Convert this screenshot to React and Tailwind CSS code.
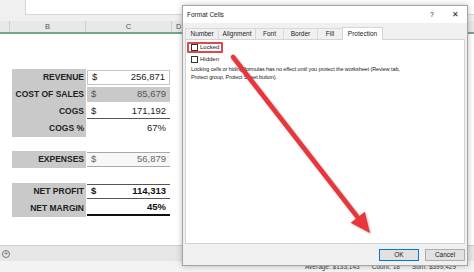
import React from "react";

const rows = [
  { label: "REVENUE", dollar: "$", value: "256,871", kind: "box" },
  { label: "COST OF SALES", dollar: "$", value: "85,679", kind: "shaded" },
  { label: "COGS", dollar: "$", value: "171,192", kind: "underline" },
  { label: "COGS %", dollar: "", value: "67%", kind: "plain" },
];

const ValueCell = ({ dollar, value, kind }) => {
  const styles = {
    box: "bg-white border border-[#c4c4c4] text-[#222]",
    shaded: "bg-[#c9c9c9] text-[#555]",
    underline: "bg-white border-b border-[#555] text-[#222]",
    plain: "bg-white text-[#222]",
    ruled: "bg-[#f7f7f7] border-y border-[#a8a8a8] text-[#666]",
    total: "bg-white border-y border-[#555] text-[#111] font-bold",
    double: "bg-white border-b-2 border-[#111] text-[#111] font-bold",
  };
  return (
    <div className="w-[84px] h-full pl-[1px] py-[1px]">
      <div
        className={`h-full flex items-center justify-between pl-[4px] pr-[4px] text-[9.5px] ${styles[kind]}`}
      >
        <span>{dollar}</span>
        <span>{value}</span>
      </div>
    </div>
  );
};

const SheetRow = ({ label, dollar, value, kind }) => (
  <div className="flex h-[17px]">
    <div className="w-[12px]" />
    <div className="w-[74px] bg-[#c9c9c9] flex items-center justify-end pr-[2px] text-[8.5px] font-bold text-[#222]">
      {label}
    </div>
    <ValueCell dollar={dollar} value={value} kind={kind} />
  </div>
);

const Tab = ({ children, active, w }) =>
  active ? (
    <div
      className={`${w} h-[13px] -mb-[1px] bg-white border border-b-0 border-[#d4d4d4] flex items-center justify-center text-[6.5px] text-[#222] relative z-10`}
    >
      {children}
    </div>
  ) : (
    <div
      className={`${w} h-[11px] mt-[1px] bg-[#f0f0f0] border border-r-0 border-b-0 border-[#d9d9d9] flex items-center justify-center text-[6.5px] text-[#222]`}
    >
      {children}
    </div>
  );

const Checkbox = () => (
  <div className="w-[7px] h-[7px] border border-[#333] bg-white" />
);

export default function App() {
  return (
    <div className="relative w-[474px] h-[272px] overflow-hidden bg-white flex flex-col font-['Liberation_Sans',Arial,sans-serif]">
      {/* formula bar */}
      <div className="bg-[#f0f0f0] pb-[6px]">
        <div className="ml-[25px] h-[15px] bg-white border-l border-b border-[#d6d6d6]" />
      </div>

      {/* column headers */}
      <div className="flex h-[13px] bg-[#e8e8e8] border-b-2 border-[#74a68a] text-[7.5px] text-[#555]">
        <div className="w-[10px] border-r border-[#cfcfcf]" />
        <div className="w-[76px] border-r border-[#cfcfcf] flex items-center justify-center">B</div>
        <div className="w-[86px] border-r border-[#cfcfcf] flex items-center justify-center">C</div>
        <div className="flex-1 flex items-center pl-[4px]">D</div>
      </div>

      {/* grid */}
      <div className="flex-1 bg-white pt-[35px]">
        {rows.map((r) => (
          <SheetRow key={r.label} {...r} />
        ))}
        <div className="h-[14px]" />
        <SheetRow label="EXPENSES" dollar="$" value="56,879" kind="ruled" />
        <div className="h-[15px]" />
        <SheetRow label="NET PROFIT" dollar="$" value="114,313" kind="total" />
        <SheetRow label="NET MARGIN" dollar="" value="45%" kind="double" />
      </div>

      {/* sheet tabs */}
      <div className="h-[16px] bg-[#e6e6e6] border-t border-[#cdcdcd] flex items-center pl-[2px]">
        <div className="w-[8px] h-[8px] rounded-full border border-[#777] flex items-center justify-center text-[7px] leading-none text-[#555]">
          +
        </div>
      </div>

      {/* status bar */}
      <div className="h-[11px] bg-[#f3f3f3] flex items-start justify-end pr-[18px] pt-[3px] gap-[12px] text-[6.5px] text-[#444] leading-none">
        <span>Average: $133,143</span>
        <span>Count: 18</span>
        <span>Sum: $399,429</span>
      </div>

      {/* Format Cells dialog */}
      <div className="absolute left-[182px] top-[5px] w-[286px] h-[261px] bg-[#f0f0f0] border border-[#a5a5a5] shadow-[0_0_6px_rgba(0,0,0,0.25)] flex flex-col">
        <div className="h-[17px] bg-white flex items-center pl-[4px] pt-[1px] text-[6.5px] text-[#222]">
          <span>Format Cells</span>
          <span className="ml-auto mr-[18px] text-[7px]">?</span>
          <span className="mr-[8px] text-[8px] font-light">✕</span>
        </div>
        <div className="flex items-end pl-[2px] pt-[4px]">
          <Tab w="w-[33px]">Number</Tab>
          <Tab w="w-[37px]">Alignment</Tab>
          <Tab w="w-[28px]">Font</Tab>
          <Tab w="w-[34px]">Border</Tab>
          <Tab w="w-[25px]">Fill</Tab>
          <Tab w="w-[41px]" active>
            Protection
          </Tab>
        </div>
        <div className="mx-[2px] h-[205px] bg-white border border-[#d4d4d4] pl-[1px] pt-[2px] text-[6px] text-[#222]">
          <div className="inline-flex items-center w-[36px] h-[11px] border-2 border-[#e0474c] rounded-[1px] pl-[2px] gap-[2px]">
            <Checkbox />
            <span>Locked</span>
          </div>
          <div className="flex items-center pl-[4px] gap-[2px] mt-[1px] h-[8px]">
            <Checkbox />
            <span>Hidden</span>
          </div>
          <div className="pl-[4px] mt-[2px] leading-[8px] whitespace-nowrap text-[5.5px] tracking-[-0.1px]">
            <div>Locking cells or hiding formulas has no effect until you protect the worksheet (Review tab,</div>
            <div>Protect group, Protect Sheet button).</div>
          </div>
        </div>
        <div className="flex justify-end gap-[6px] pr-[2px] mt-[5px]">
          <div className="w-[40px] h-[12px] bg-[#e1e1e1] border border-[#0078d7] flex items-center justify-center text-[6.5px] text-[#222]">
            OK
          </div>
          <div className="w-[40px] h-[12px] bg-[#e1e1e1] border border-[#adadad] flex items-center justify-center text-[6.5px] text-[#222]">
            Cancel
          </div>
        </div>
      </div>

      {/* red arrow annotation */}
      <svg
        className="absolute inset-0 pointer-events-none drop-shadow-[1px_1px_1px_rgba(0,0,0,0.3)]"
        width="474"
        height="272"
        viewBox="0 0 474 272"
      >
        <line x1="233" y1="57" x2="359" y2="219" stroke="#e8363c" strokeWidth="4.5" strokeLinecap="round" />
        <polygon points="370,233 350.6,222.7 364.8,211.7" fill="#e8363c" />
      </svg>
    </div>
  );
}
